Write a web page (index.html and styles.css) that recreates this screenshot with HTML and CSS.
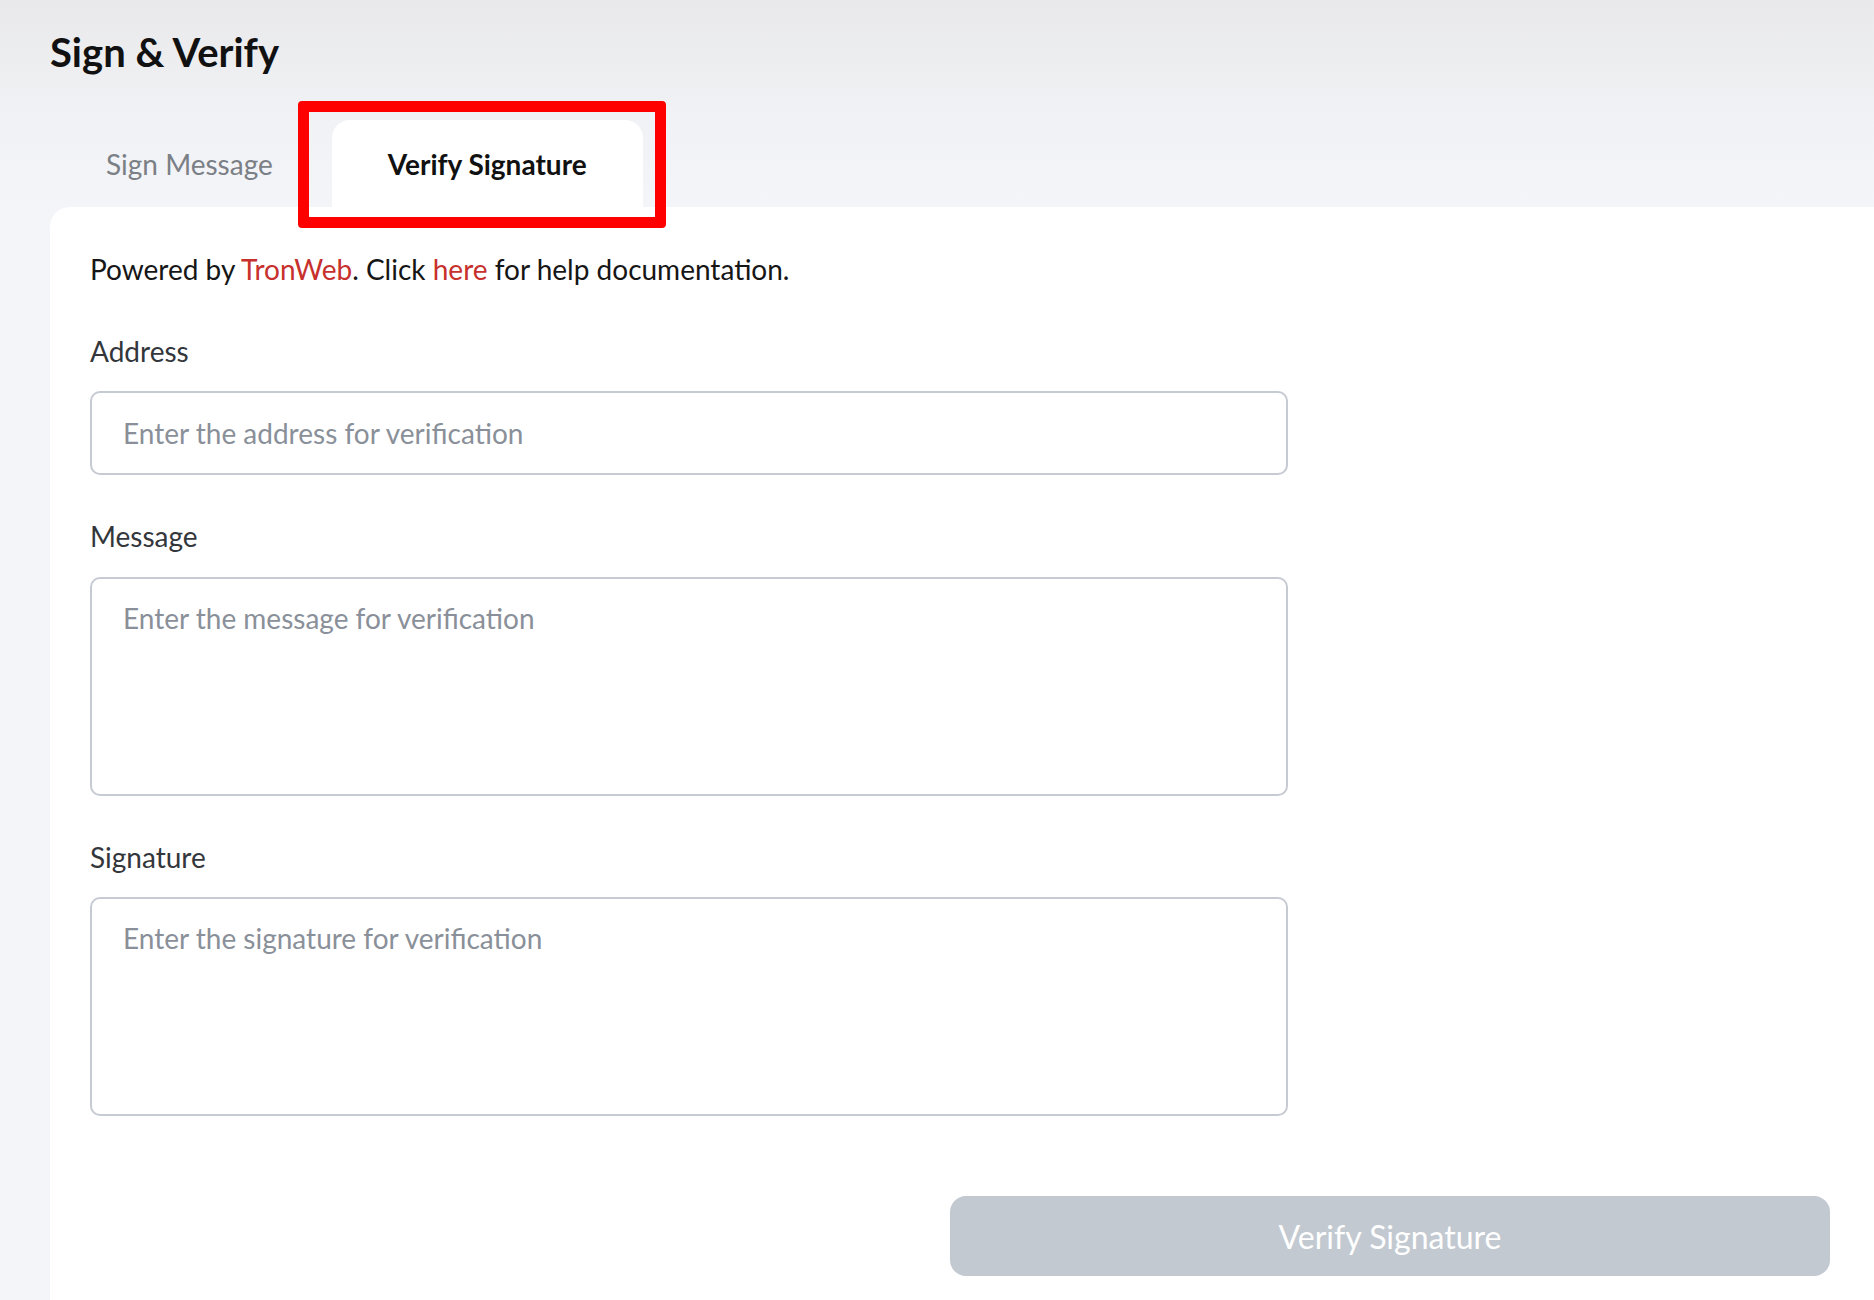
FILE: index.html
```html
<!DOCTYPE html>
<html>
  <head>
    <title>Sign &amp; Verify</title>
    <link rel="stylesheet" href="styles.css">
  </head>

  <body>
    <div class="page">
      <h1 class="title">Sign &amp; Verify</h1>

      <div class="tabs">
        <div class="tab">Sign Message</div>
        <div class="tab active">
          Verify Signature
          <span class="highlight"></span>
        </div>
      </div>

      <div class="panel">
        <p class="intro">
          Powered by <a href="#">TronWeb</a>. Click <a href="#">here</a> for help documentation.
        </p>

        <form class="form">
          <div class="field">
            <label for="address">Address</label>
            <input
              type="text"
              id="address"
              name="address"
              placeholder="Enter the address for verification"
            />
          </div>

          <div class="field">
            <label for="message">Message</label>
            <textarea
              id="message"
              name="message"
              placeholder="Enter the message for verification"
            ></textarea>
          </div>

          <div class="field">
            <label for="signature">Signature</label>
            <textarea
              id="signature"
              name="signature"
              placeholder="Enter the signature for verification"
            ></textarea>
          </div>

          <div class="actions">
            <button type="submit" disabled>Verify Signature</button>
          </div>
        </form>
      </div>
    </div>
  </body>
</html>
```

FILE: styles.css
```css
/* styles.css */
body {
  margin: 0;
  font-family: Lato, "Liberation Sans", sans-serif;
  background: linear-gradient(180deg, #e9e9eb 0, #f1f2f5 120px, #f4f5f9 210px);
  min-height: 100vh;
}

.page {
  display: flex;
  flex-direction: column;
  min-height: 100vh;
}

.title {
  margin: 28px 0 0 50px;
  font-size: 40px;
  line-height: 48px;
  font-weight: 700;
  color: #111;
}

.tabs {
  display: flex;
  gap: 3px;
  margin-top: 44px;
  padding-left: 50px;
}

.tab {
  padding: 27px 56px 26px;
  font-size: 28px;
  line-height: 34px;
  color: #7b7f86;
  cursor: pointer;
}

.tab.active {
  position: relative;
  background-color: #fff;
  border-radius: 18px 18px 0 0;
  color: #111;
  font-weight: 700;
}

/* red annotation frame around the active tab */
.highlight {
  position: absolute;
  left: -34px;
  top: -19px;
  right: -23px;
  bottom: -21px;
  border: 11px solid #ff0000;
  border-radius: 4px;
  z-index: 2;
  pointer-events: none;
}

.panel {
  flex: 1;
  margin-left: 50px;
  background-color: #fff;
  border-radius: 20px 0 0 0;
  padding: 46px 44px 24px 40px;
}

.intro {
  margin: 0;
  font-size: 28px;
  line-height: 33.6px;
  color: #161616;
}

.intro a {
  color: #c7302c;
  text-decoration: none;
}

.form {
  margin-top: 48px;
}

.field {
  width: 1198px;
  margin-bottom: 45px;
}

label {
  display: block;
  margin-bottom: 23px;
  font-size: 28px;
  line-height: 33.6px;
  color: #33363b;
}

input,
textarea {
  display: block;
  width: 100%;
  box-sizing: border-box;
  border: 2px solid #c6cad2;
  border-radius: 10px;
  font-family: inherit;
  font-size: 28px;
  line-height: 33.6px;
  color: #222;
  background: #fff;
  outline: none;
}

input {
  height: 84px;
  padding: 0 31px;
}

textarea {
  height: 219px;
  padding: 23px 31px;
  resize: none;
}

input::placeholder,
textarea::placeholder {
  color: #8a9099;
}

.actions {
  display: flex;
  justify-content: flex-end;
  padding-top: 35px;
}

button {
  width: 880px;
  height: 80px;
  border: none;
  border-radius: 16px;
  background-color: #c3c9d1;
  color: #fff;
  font-family: inherit;
  font-size: 32px;
}
```
